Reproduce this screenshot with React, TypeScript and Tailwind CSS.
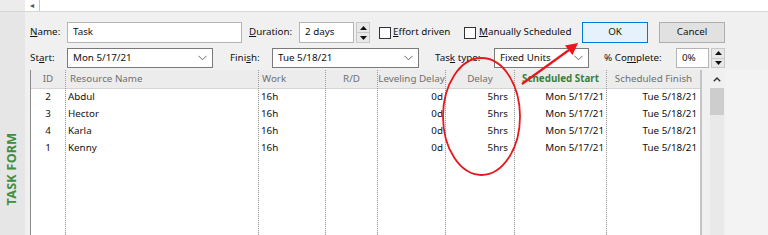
import React from "react";

function Chevron() {
  return (
    <svg width="9" height="6" viewBox="0 0 9 6" className="shrink-0">
      <polyline points="0.5,0.8 4.5,4.8 8.5,0.8" fill="none" stroke="#6b6b6b" strokeWidth="1" />
    </svg>
  );
}

function Spinner() {
  return (
    <div className="ml-[2px] flex h-full w-[14px] flex-col border border-[#c8c8c8] bg-[#f0f0f0]">
      <div className="flex flex-1 items-center justify-center border-b border-[#c8c8c8] bg-[#e8e8e8]">
        <svg width="7" height="4" viewBox="0 0 7 4"><polygon points="0,4 7,4 3.5,0" fill="#111" /></svg>
      </div>
      <div className="flex flex-1 items-center justify-center bg-[#e8e8e8]">
        <svg width="7" height="4" viewBox="0 0 7 4"><polygon points="0,0 7,0 3.5,4" fill="#111" /></svg>
      </div>
    </div>
  );
}

function Select({ w, text }: { w: string; text: string }) {
  return (
    <div className={`${w} flex h-full items-center justify-between border border-[#7a7a7a] bg-white pl-[5px] pr-[5px]`}>
      <span>{text}</span>
      <Chevron />
    </div>
  );
}

type Col = {
  title: string;
  w: string;
  head: string;
  align: string;
  vals: string[];
};

const cols: Col[] = [
  { title: "ID", w: "w-[35px]", head: "justify-center text-[#707070]", align: "justify-center", vals: ["2", "3", "4", "1"] },
  { title: "Resource Name", w: "w-[193px]", head: "justify-start pl-[4px] text-[#707070]", align: "justify-start pl-[2px]", vals: ["Abdul", "Hector", "Karla", "Kenny"] },
  { title: "Work", w: "w-[67px]", head: "justify-start pl-[3px] text-[#707070]", align: "justify-start pl-[2px]", vals: ["16h", "16h", "16h", "16h"] },
  { title: "R/D", w: "w-[52px]", head: "justify-center text-[#707070]", align: "justify-center", vals: ["", "", "", ""] },
  { title: "Leveling Delay", w: "w-[68px]", head: "justify-center text-[#707070]", align: "justify-end pr-[2px]", vals: ["0d", "0d", "0d", "0d"] },
  { title: "Delay", w: "w-[69px]", head: "justify-center text-[#707070]", align: "justify-end pr-[6px]", vals: ["5hrs", "5hrs", "5hrs", "5hrs"] },
  { title: "Scheduled Start", w: "w-[92px]", head: "justify-center font-bold text-[#3b7f3b] bg-[#e4e4e4]", align: "justify-end pr-[2px]", vals: ["Mon 5/17/21", "Mon 5/17/21", "Mon 5/17/21", "Mon 5/17/21"] },
  { title: "Scheduled Finish", w: "w-[95px]", head: "justify-center text-[#707070]", align: "justify-end pr-[3px]", vals: ["Tue 5/18/21", "Tue 5/18/21", "Tue 5/18/21", "Tue 5/18/21"] },
];

export default function App() {
  return (
    <div className="relative flex h-[235px] w-[768px] flex-col overflow-hidden bg-[#f0f0f0] font-['Noto_Sans','Open_Sans',sans-serif] text-[9.8px] text-[#111]">
      {/* top strip */}
      <div className="flex h-[12px] shrink-0 border-b border-[#d6d6d6]">
        <div className="w-[25px] bg-[#ececec]" />
        <div className="flex w-[15px] items-center justify-center border-r border-[#c8c8c8] bg-white text-[7px] leading-none text-[#555]">◄</div>
        <div className="flex-1 bg-white" />
      </div>

      <div className="flex flex-1">
        {/* left strip */}
        <div className="relative w-[25px] shrink-0 bg-[#e6e6e6]">
          <div className="absolute left-[12px] top-[157px] -translate-x-1/2 -translate-y-1/2 -rotate-90 whitespace-nowrap text-[12.5px] font-bold tracking-[0.3px] text-[#3f8f3f]">
            TASK FORM
          </div>
        </div>

        {/* content */}
        <div className="flex flex-1 flex-col pl-[5px] pt-[10px]">
          {/* row 1 */}
          <div className="flex h-[21px] items-center">
            <span className="w-[37px]"><u>N</u>ame:</span>
            <div className="flex h-full w-[175px] items-center border border-[#b4b4b4] bg-white pl-[5px]">Task</div>
            <span className="ml-[7px] w-[50px]"><u>D</u>uration:</span>
            <div className="flex h-full w-[55px] items-center border border-[#b4b4b4] bg-white pl-[5px]">2 days</div>
            <Spinner />
            <div className="ml-[9px] h-[12px] w-[12px] border border-[#333] bg-white" />
            <span className="ml-[2px] w-[71px]"><u>E</u>ffort driven</span>
            <div className="h-[12px] w-[12px] border border-[#333] bg-white" />
            <span className="ml-[3px] w-[103px]"><u>M</u>anually Scheduled</span>
            <div className="flex h-full w-[66px] items-center justify-center border border-[#0078d7] bg-[#e5f1fb]">OK</div>
            <div className="ml-[11px] flex h-full w-[66px] items-center justify-center border border-[#adadad] bg-[#e1e1e1]">Cancel</div>
          </div>

          {/* row 2 */}
          <div className="mt-[5px] flex h-[20px] items-center">
            <span className="w-[37px]">St<u>a</u>rt:</span>
            <Select w="w-[146px]" text="Mon 5/17/21" />
            <span className="ml-[17px] w-[42px]">Fini<u>s</u>h:</span>
            <Select w="w-[147px]" text="Tue 5/18/21" />
            <span className="ml-[16px] w-[59px]">Tas<u>k</u> type:</span>
            <Select w="w-[95px]" text="Fixed Units" />
            <span className="ml-[15px] w-[72px]">% Co<u>m</u>plete:</span>
            <div className="flex h-full w-[33px] items-center border border-[#b4b4b4] bg-white pl-[5px]">0%</div>
            <Spinner />
          </div>

          {/* table */}
          <div className="mt-[2px] flex flex-1">
            <div className="flex flex-1 border-l border-[#8c8c8c]">
              {cols.map((c, i) => (
                <div
                  key={c.title}
                  className={`${c.w} flex flex-col ${i === cols.length - 1 ? "border-r-2 border-[#c4c4c4]" : "border-r border-dotted border-[#9a9a9a]"}`}
                >
                  <div className={`flex h-[19px] shrink-0 items-center overflow-hidden whitespace-nowrap border-b border-[#d4d4d4] bg-[#ececec] ${c.head}`}>
                    {c.title}
                  </div>
                  <div className="flex flex-1 flex-col bg-white">
                    {c.vals.map((v, j) => (
                      <div key={j} className={`flex h-[17px] items-center whitespace-nowrap ${c.align}`}>
                        {v}
                      </div>
                    ))}
                  </div>
                </div>
              ))}
            </div>
            {/* scrollbar */}
            <div className="flex w-[23px] shrink-0 flex-col">
              <div className="flex h-[18px] items-center justify-end pr-[4px]">
                <svg width="8" height="5" viewBox="0 0 8 5"><polyline points="0.8,4.3 4,1 7.2,4.3" fill="none" stroke="#333" strokeWidth="1.4" /></svg>
              </div>
              <div className="flex flex-1 justify-end pr-[1px]">
                <div className="flex w-[14px] flex-col bg-[#e9e9e9]">
                  <div className="h-[27px] bg-[#cdcdcd]" />
                </div>
              </div>
            </div>
            <div className="w-[44px] shrink-0 bg-[#f3f3f3]" />
          </div>
        </div>
      </div>

      {/* red annotations */}
      <svg className="pointer-events-none absolute left-0 top-0" width="768" height="235" viewBox="0 0 768 235">
        <ellipse cx="481.5" cy="116.5" rx="38.5" ry="58.5" fill="none" stroke="#e8161d" strokeWidth="1.8" />
        <line x1="522" y1="84" x2="569" y2="50" stroke="#e8161d" strokeWidth="2.2" />
        <polygon points="578,43 565,45.5 572.5,55" fill="#e8161d" />
      </svg>
    </div>
  );
}
